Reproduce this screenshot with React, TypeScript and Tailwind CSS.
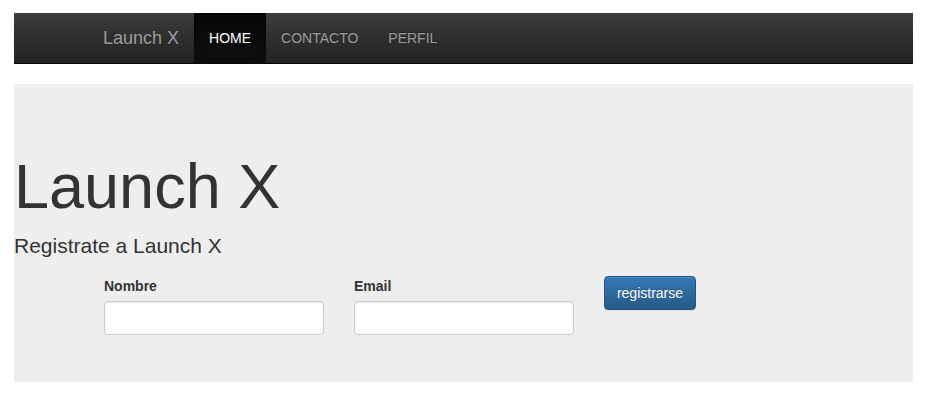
const NAV_LINKS = [
  { label: "HOME", active: true },
  { label: "CONTACTO", active: false },
  { label: "PERFIL", active: false },
];

function Navbar() {
  return (
    <nav className="flex h-[51px] border-b border-[#080808] bg-gradient-to-b from-[#3c3c3c] to-[#222] pl-[74px]">
      <a className="flex items-center px-[15px] text-[18px] text-[#9d9d9d] [text-shadow:0_1px_0_rgba(0,0,0,0.25)]">
        Launch X
      </a>
      <ul className="flex">
        {NAV_LINKS.map((link) =>
          link.active ? (
            <li
              key={link.label}
              className="flex items-center bg-gradient-to-b from-[#080808] to-[#0f0f0f] px-[15px] text-[14px] text-white shadow-[inset_0_3px_9px_rgba(0,0,0,0.25)]"
            >
              {link.label}
            </li>
          ) : (
            <li
              key={link.label}
              className="flex items-center px-[15px] text-[14px] text-[#9d9d9d] [text-shadow:0_-1px_0_rgba(0,0,0,0.25)]"
            >
              {link.label}
            </li>
          ),
        )}
      </ul>
    </nav>
  );
}

function Field({ label }: { label: string }) {
  return (
    <div className="flex w-[220px] flex-col">
      <label className="mb-[5px] text-[14px] leading-[20px] font-bold text-[#333]">{label}</label>
      <input
        type="text"
        className="h-[34px] rounded-[4px] border border-[#ccc] bg-white px-3 shadow-[inset_0_1px_1px_rgba(0,0,0,0.075)] outline-none"
      />
    </div>
  );
}

export default function App() {
  return (
    <div className="min-h-screen bg-white pt-[13px] pr-[15px] pl-[14px] font-['Liberation_Sans',Arial,sans-serif]">
      <Navbar />

      {/* jumbotron */}
      <section className="mt-[20px] bg-[#eee] pt-[68px] pb-[47px] text-[#333]">
        <h1 className="text-[63px] leading-[69px]">Launch X</h1>
        <p className="mt-[10px] text-[21px] leading-[30px]">Registrate a Launch X</p>

        <form className="mt-[15px] flex items-start gap-[30px] pl-[90px]">
          <Field label="Nombre" />
          <Field label="Email" />
          <button
            type="button"
            className="h-[34px] w-[92px] rounded-[4px] border border-[#245580] bg-gradient-to-b from-[#337ab7] to-[#265a88] text-[14px] text-white shadow-[inset_0_1px_0_rgba(255,255,255,0.15),0_1px_1px_rgba(0,0,0,0.075)] [text-shadow:0_-1px_0_rgba(0,0,0,0.2)]"
          >
            registrarse
          </button>
        </form>
      </section>
    </div>
  );
}
